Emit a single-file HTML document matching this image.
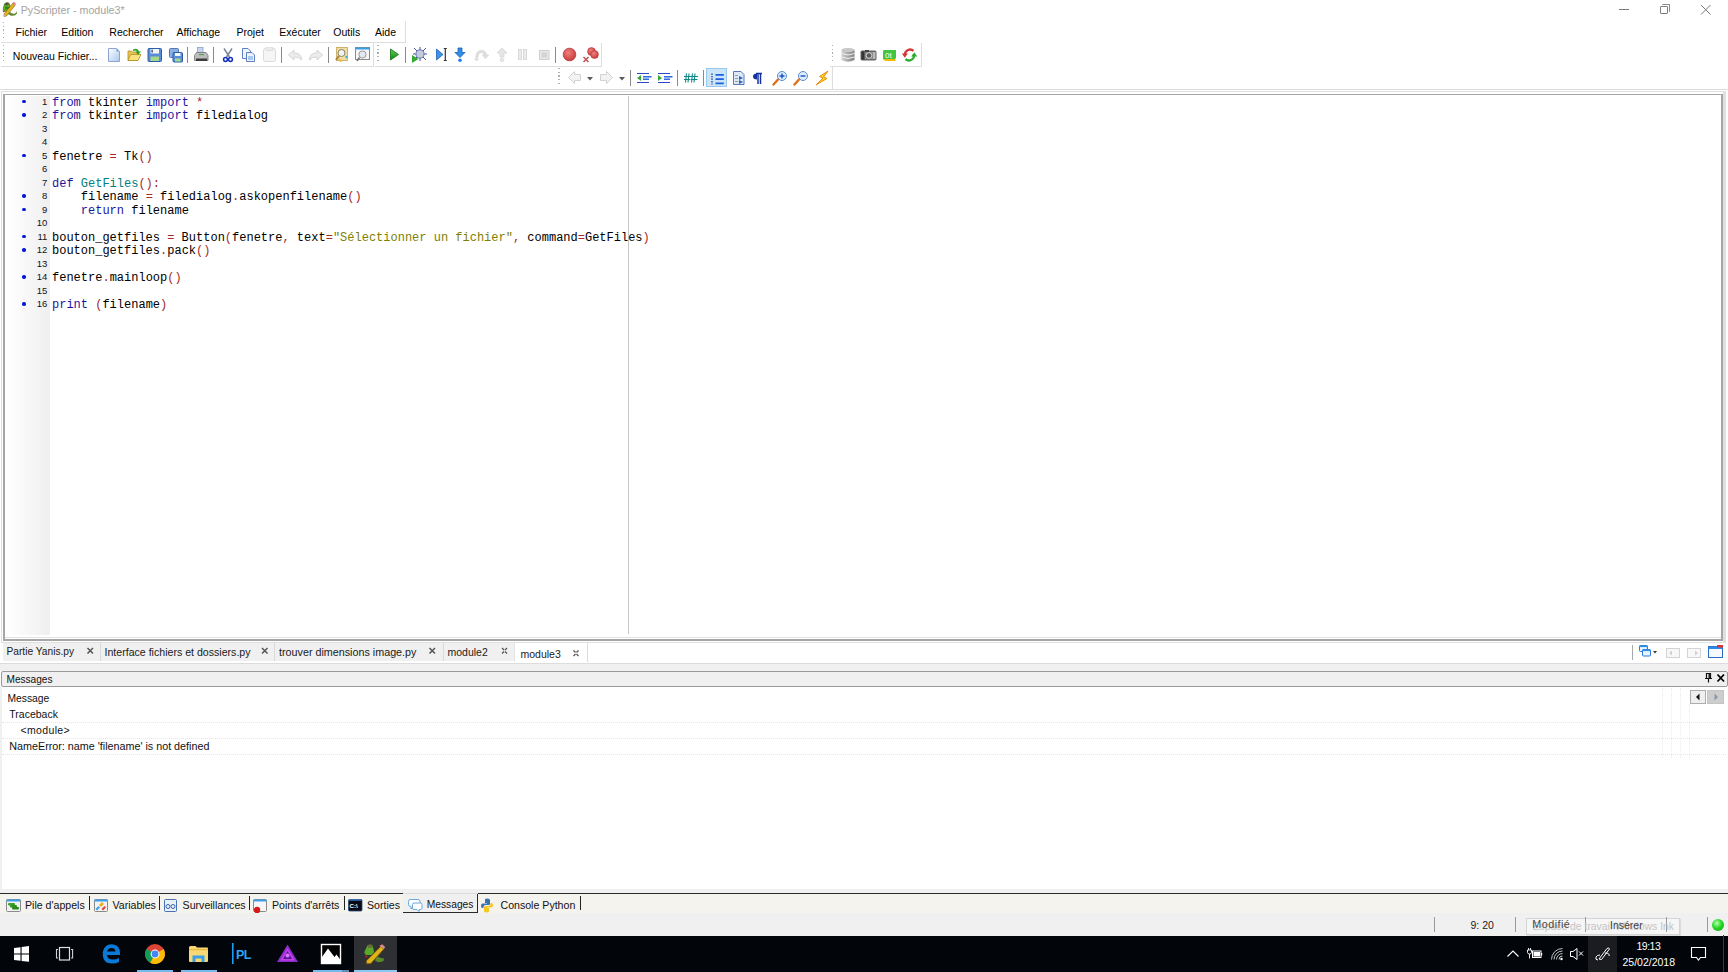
<!DOCTYPE html>
<html><head><meta charset="utf-8">
<style>
*{margin:0;padding:0;box-sizing:border-box}
html,body{width:1728px;height:972px;overflow:hidden;background:#fff}
body{position:relative;font-family:"Liberation Sans",sans-serif;font-size:10.5px;color:#000}
.a{position:absolute}
.t{position:absolute;white-space:pre;line-height:1}
.hl{position:absolute;height:1px}
.vl{position:absolute;width:1px}
.code{position:absolute;left:52px;top:96.8px;font-family:"Liberation Mono",monospace;font-size:12px;line-height:13.5px;white-space:pre;color:#000}
.kw{color:#1c169e}
.op{color:#a52a2a}
.st{color:#808000}
.fn{color:#008080}
.ln{position:absolute;left:27.3px;width:20px;text-align:right;font-family:"Liberation Sans",sans-serif;font-size:9.5px;line-height:13.5px;color:#111;}
.dot{position:absolute;left:22.3px;width:3.4px;height:3.4px;background:#0818d8;border-radius:50%}
.drag{position:absolute;width:1.6px;background:repeating-linear-gradient(180deg,#b0b0b0 0 1.5px,transparent 1.5px 3.65px)}
.sep{position:absolute;width:1px;background:#8a8a8a}
</style></head><body>


<!-- Title bar -->
<svg class="a" style="left:1px;top:1.3px" width="17" height="16" viewBox="0 0 17 16">
 <path d="M2.5 6 Q3 2 6 1.5 Q9 1.5 9 5 Q9.5 9 7 10 L3.5 10.5 Q1.5 9.5 2.5 6Z" fill="#58b828" stroke="#3a5a18" stroke-width="0.5"/>
 <path d="M3.5 2.5 Q5.5 0.8 8 2 L8 4 L4 4.5Z" fill="#6e6a30"/>
 <circle cx="5.5" cy="3.2" r="0.9" fill="#445"/>
 <path d="M4 6.5 Q6 5.5 8 6.8 M4 8 Q6 7.2 8.5 8.2" stroke="#2a4a10" stroke-width="0.7" fill="none"/>
 <path d="M1.5 9.3 L4 10 L2.5 11.5Z" fill="#c83020"/>
 <path d="M9 11 Q11 13.5 14 12.5 Q15.5 11.5 15.5 10 L16 12.5 Q14 15.5 9.5 14.5 L7 13Z" fill="#5c8a28"/>
 <path d="M11.5 2.5 L14 4.5 L5.5 15 L3 15.5 L3 13Z" fill="#e4b418" stroke="#5a4810" stroke-width="0.5"/>
 <path d="M11 2.2 L12.5 1 Q14.5 1 15 3 L14 4.5Z" fill="#d88a8a"/>
 <path d="M3 13 L5.5 15 L2.8 16Z" fill="#d8a878"/>
</svg>
<div class="t" style="left:20.7px;top:5px;font-size:10.7px;color:#a4a4a4">PyScripter - module3*</div>
<div class="hl" style="left:1619px;top:9px;width:9.5px;background:#7a7a7a"></div>
<div class="a" style="left:1659.5px;top:5.5px;width:8px;height:8px;border:1px solid #7e7e7e;background:#fff;border-radius:1px"></div>
<div class="a" style="left:1661.5px;top:4px;width:8px;height:8px;border-top:1px solid #8a8a8a;border-right:1px solid #8a8a8a;border-radius:1px"></div>
<svg class="a" style="left:1699.5px;top:3.5px" width="12" height="12"><path d="M1 1 L10.5 10.5 M10.5 1 L1 10.5" stroke="#7a7a7a" stroke-width="1"/></svg>

<!-- menu bar -->
<div class="drag" style="left:2.7px;top:21.8px;height:17px"></div>
<div class="t" style="left:15.5px;top:27.2px">Fichier</div>
<div class="t" style="left:61.3px;top:27.2px">Edition</div>
<div class="t" style="left:109.3px;top:27.2px">Rechercher</div>
<div class="t" style="left:176.5px;top:27.2px">Affichage</div>
<div class="t" style="left:236.5px;top:27.2px">Projet</div>
<div class="t" style="left:279.3px;top:27.2px">Exécuter</div>
<div class="t" style="left:333.3px;top:27.2px">Outils</div>
<div class="t" style="left:375px;top:27.2px">Aide</div>
<div class="hl" style="left:1px;top:42px;width:405px;background:#dedede"></div>
<div class="vl" style="left:405px;top:21px;height:22px;background:#dedede"></div>

<!-- toolbar row1 -->
<div class="drag" style="left:2.7px;top:45.3px;height:17px"></div>
<div class="t" style="left:12.8px;top:50.7px">Nouveau Fichier...</div>
<div class="hl" style="left:1px;top:66px;width:373px;background:#dedede"></div>
<div class="vl" style="left:373px;top:43px;height:24px;background:#dedede"></div>
<div class="sep" style="left:187px;top:47px;height:16px"></div>
<div class="sep" style="left:213px;top:47px;height:16px"></div>
<div class="sep" style="left:281px;top:47px;height:16px"></div>
<div class="sep" style="left:328px;top:47px;height:16px"></div>
<svg class="a" style="left:0;top:0;z-index:2" width="940" height="92" viewBox="0 0 940 92">
<defs>
 <linearGradient id="gNew" x1="0" y1="0" x2="1" y2="1"><stop offset="0" stop-color="#ffffff"/><stop offset="1" stop-color="#a9c8ee"/></linearGradient>
 <radialGradient id="gRed" cx="0.4" cy="0.35" r="0.7"><stop offset="0" stop-color="#f08080"/><stop offset="1" stop-color="#c83838"/></radialGradient>
 <linearGradient id="gGreen" x1="0" y1="0" x2="0" y2="1"><stop offset="0" stop-color="#5cd05c"/><stop offset="1" stop-color="#108a10"/></linearGradient>
 <linearGradient id="gDB" x1="0" y1="0" x2="1" y2="0"><stop offset="0" stop-color="#d0d0d0"/><stop offset="0.5" stop-color="#a8a8a8"/><stop offset="1" stop-color="#808080"/></linearGradient>
</defs>
<!-- new file -->
<path d="M108.5 48.5 H116.5 L119.5 51.5 V61.5 H108.5 Z" fill="url(#gNew)" stroke="#8ea4cc"/>
<path d="M116.5 48.5 V51.5 H119.5 Z" fill="#6f9fe0"/>
<!-- open -->
<path d="M128 51 H131.5 L132.5 52 H137.5 V60.5 H128Z" fill="#e6c45a" stroke="#b8901e" stroke-width="0.8"/>
<path d="M128 60.5 L130.5 54.5 H141 L138 60.5Z" fill="#f8e27e" stroke="#b8901e" stroke-width="0.8"/>
<path d="M133 49.5 Q138 47.5 139 51.5 L141 51.5 L138 55 L135.5 51.5 L137 51.5 Q136.5 50 133 51Z" fill="#2aa02a"/>
<!-- save -->
<rect x="148" y="48.5" width="13.5" height="13" rx="1" fill="#5b8cd8" stroke="#2d5ea8"/>
<rect x="150.5" y="49" width="8.5" height="4.5" fill="#f2f6fb"/>
<rect x="151.5" y="49.6" width="1.2" height="3" fill="#333"/>
<rect x="150.5" y="56.5" width="8.5" height="4.5" fill="#a6d88c"/>
<!-- save all -->
<rect x="169.5" y="48.5" width="9" height="9" rx="1" fill="#8eb0e0" stroke="#5078b4"/>
<rect x="173" y="52.5" width="9.5" height="9.5" rx="1" fill="#5b8cd8" stroke="#2d5ea8"/>
<rect x="175" y="53" width="5.5" height="3" fill="#f2f6fb"/>
<rect x="175" y="58.5" width="5.5" height="3" fill="#a6d88c"/>
<!-- print -->
<rect x="197.5" y="47.5" width="5.5" height="5" fill="#c6d6f2" stroke="#8aa0c8" stroke-width="0.8"/>
<path d="M194.5 55.5 L196.5 52.5 H206 L208 55.5 V60.5 H194.5Z" fill="#bdbdbd" stroke="#6e6e6e" stroke-width="0.8"/>
<rect x="196" y="58.5" width="11" height="2.5" fill="#3c3c3c"/>
<rect x="199" y="54" width="5" height="1.2" fill="#5aa05a"/>
<!-- cut -->
<path d="M224 48.5 L229.5 57 M232 48.5 L226.5 57" stroke="#7a869e" stroke-width="1.5"/>
<circle cx="225.5" cy="59.5" r="1.9" fill="none" stroke="#1432c0" stroke-width="1.5"/>
<circle cx="230.5" cy="59.5" r="1.9" fill="none" stroke="#1432c0" stroke-width="1.5"/>
<!-- copy -->
<path d="M242.5 48.5 H248 L250.5 51 V58.5 H242.5Z" fill="#eef4fd" stroke="#5f7fbe"/>
<path d="M246.5 52.5 H252 L254.5 55 V61.5 H246.5Z" fill="#eef4fd" stroke="#5f7fbe"/>
<rect x="248" y="56" width="5" height="4" fill="#a8c8f0"/>
<!-- paste disabled -->
<rect x="263.5" y="48.5" width="12" height="13" rx="2" fill="#f5f5f5" stroke="#dadada"/>
<rect x="266" y="47.5" width="7" height="3" fill="#ebebeb" stroke="#d8d8d8" stroke-width="0.6"/>
<!-- undo/redo disabled -->
<path d="M288.5 55 L294 50 V53 Q301.5 53 301.5 60 Q299 56.5 294 57 V60Z" fill="#ececec" stroke="#d4d4d4"/>
<path d="M322.5 55 L317 50 V53 Q309.5 53 309.5 60 Q312 56.5 317 57 V60Z" fill="#ececec" stroke="#d4d4d4"/>
<!-- find -->
<rect x="336.5" y="47.5" width="11" height="13" fill="#f1dda2" stroke="#c4a450" stroke-width="0.8"/>
<circle cx="341.5" cy="53" r="3.5" fill="#eef3f8" stroke="#8a8460" stroke-width="1"/>
<path d="M339 56 L336 60" stroke="#a88440" stroke-width="2"/>
<path d="M338 58 L343 61 L340 62Z" fill="#e8b840"/>
<circle cx="346.5" cy="57" r="1.2" fill="#40b0d0"/>
<!-- find in files -->
<rect x="355.5" y="47.5" width="14" height="12" fill="#f6f6f6" stroke="#8a8a8a"/>
<rect x="355.5" y="47.5" width="14" height="2" fill="#38a0e8"/>
<circle cx="362.5" cy="54.5" r="3.6" fill="#dfe8f4" stroke="#9a9a9a" stroke-width="1"/>
<path d="M359.5 57.5 L357 61" stroke="#707070" stroke-width="1.5"/>
<!-- run -->
<path d="M390.5 49 L398.5 54.5 L390.5 60Z" fill="url(#gGreen)" stroke="#0e6e0e" stroke-width="0.8"/>
<!-- debug -->
<path d="M414 48 L426 60 M426 48 L414 60 M413 54 H427 M420 47 V61" stroke="#4656a8" stroke-width="1"/>
<ellipse cx="420" cy="54" rx="4" ry="4.2" fill="#c4ccdc" stroke="#5464a8" stroke-width="0.8"/>
<path d="M412 55 L418.5 59 L412 63Z" fill="#36a836"/>
<!-- run to cursor -->
<path d="M436.5 49 L443 54.5 L436.5 60Z" fill="#3c94e4" stroke="#1f62b4" stroke-width="0.8"/>
<path d="M445.3 48.5 V60.5 M443.8 48.5 H446.8 M443.8 60.5 H446.8" stroke="#333" stroke-width="1.2"/>
<!-- step into -->
<path d="M458 48 H462 V52.5 H465 L460 57.5 L455 52.5 H458Z" fill="#3090e4" stroke="#1a60b4" stroke-width="0.8"/>
<circle cx="460" cy="60.3" r="1.8" fill="#1f80e4"/>
<!-- step over disabled -->
<path d="M476 57 Q476 50.5 481.5 50.5 Q486 50.5 486.5 55 L488.5 55 L485.5 58.5 L482.5 55 H484.5 Q484 52.5 481.5 52.5 Q478 52.5 478 57Z" fill="#e2e2e2" stroke="#d2d2d2" stroke-width="0.8"/>
<circle cx="476.5" cy="59" r="1.6" fill="#e6e6e6" stroke="#d2d2d2" stroke-width="0.6"/>
<!-- step out disabled -->
<path d="M502 48 L507 53 H504 V57 H500 V53 H497Z" fill="#e6e6e6" stroke="#d4d4d4" stroke-width="0.8"/>
<circle cx="502" cy="60" r="1.8" fill="#e6e6e6" stroke="#d4d4d4" stroke-width="0.6"/>
<!-- pause disabled -->
<rect x="518.5" y="49.5" width="3" height="10" fill="#ebebeb" stroke="#d4d4d4" stroke-width="0.8"/>
<rect x="523.5" y="49.5" width="3" height="10" fill="#ebebeb" stroke="#d4d4d4" stroke-width="0.8"/>
<!-- stop disabled -->
<rect x="539.5" y="50.5" width="9.5" height="9" fill="#e8e8e8" stroke="#cfcfcf"/>
<rect x="541.5" y="52.5" width="5.5" height="5" fill="#d4d4d4"/>
<!-- breakpoint -->
<circle cx="569.5" cy="54.5" r="6.3" fill="url(#gRed)" stroke="#b43434" stroke-width="0.8"/>
<!-- clear bps -->
<circle cx="591.5" cy="51.5" r="3.9" fill="url(#gRed)" stroke="#b43434" stroke-width="0.6"/>
<circle cx="594.5" cy="54.5" r="3.9" fill="url(#gRed)" stroke="#b43434" stroke-width="0.6"/>
<path d="M583.5 57 L588.5 62 M588.5 57 L583.5 62" stroke="#c85454" stroke-width="1.6"/>
<!-- DB -->
<path d="M841.5 50 Q848 46.5 854.5 50 V60 Q848 63.5 841.5 60Z" fill="url(#gDB)"/>
<path d="M841.5 53.5 Q848 56.5 854.5 53.5 M841.5 57 Q848 60 854.5 57" stroke="#f0f0f0" stroke-width="1" fill="none"/>
<ellipse cx="848" cy="50" rx="6.5" ry="2" fill="#c8c8c8"/>
<!-- camera -->
<rect x="861" y="51" width="15" height="9" rx="1" fill="#8a8a8a" stroke="#3a3a3a" stroke-width="0.8"/>
<rect x="865" y="50" width="4" height="2" fill="#444"/>
<rect x="861.5" y="51.5" width="3" height="8" fill="#333"/>
<circle cx="869" cy="55.5" r="2.8" fill="#5a5a5a" stroke="#d0d0d0" stroke-width="1"/>
<rect x="873" y="52" width="2.5" height="7" fill="#b8b8b8"/>
<!-- qt -->
<path d="M884 50 H896 V58 L894.5 59.5 H883 V51Z" fill="#41c441"/>
<text x="885" y="57.6" font-family="Liberation Sans" font-size="8" fill="#fff">0t</text>
<rect x="884.5" y="59" width="11" height="2" fill="#f4b800"/>
<!-- refresh -->
<path d="M913.5 50.8 A5.3 5.3 0 0 0 904.8 54.5" stroke="#d43636" stroke-width="2.3" fill="none"/>
<path d="M901.8 53.5 L907.8 53.5 L904.8 57.8Z" fill="#d43636"/>
<path d="M905.5 59.2 A5.3 5.3 0 0 0 914.2 55.5" stroke="#2aac2a" stroke-width="2.3" fill="none"/>
<path d="M917.2 56.5 L911.2 56.5 L914.2 52.2Z" fill="#2aac2a"/>
<!-- back/fwd disabled -->
<path d="M568.5 77.5 L574.5 71.5 V74.5 H580.5 V80.5 H574.5 V83.5Z" fill="#f2f2f2" stroke="#d2d2d2"/>
<path d="M587 77 H593 L590 80.5Z" fill="#5a5a5a"/>
<path d="M612.5 77.5 L606.5 71.5 V74.5 H600.5 V80.5 H606.5 V83.5Z" fill="#f2f2f2" stroke="#d2d2d2"/>
<path d="M619 77 H625 L622 80.5Z" fill="#5a5a5a"/>
<!-- indent/dedent -->
<path d="M637 73.5 H649 M637 82.5 H649" stroke="#2a48c8" stroke-width="1"/>
<path d="M643 76.8 H651.5" stroke="#1a5ee0" stroke-width="1.4"/>
<path d="M643 79.2 H649" stroke="#1a5ee0" stroke-width="1.4"/>
<path d="M637 78 L641 75 V81Z" fill="#38a838"/>
<path d="M658 73.5 H670 M658 82.5 H670" stroke="#2a48c8" stroke-width="1"/>
<path d="M664 76.8 H672.5" stroke="#1a5ee0" stroke-width="1.4"/>
<path d="M664 79.2 H670" stroke="#1a5ee0" stroke-width="1.4"/>
<path d="M662 78 L658 75 V81Z" fill="#38a838"/>
<!-- ## -->
<path d="M686.5 73.5 L685.5 82.5 M689 73.5 L688 82.5 M692.5 73.5 L691.5 82.5 M695 73.5 L694 82.5 M684 76.5 H690.5 M684 79.5 H690 M690.5 76.5 H698 M690.5 79.5 H697.5" stroke="#118888" stroke-width="1.1"/>
<!-- line numbers icon -->
<path d="M712 73.5 V84.5" stroke="#2a4a8a" stroke-width="1.3" stroke-dasharray="1.6 0.9"/>
<path d="M715.5 74.8 H723.8 M715.5 79.1 H723.8 M715.5 83.4 H723.8" stroke="#1a5ee0" stroke-width="1.8"/>
<!-- doc icon -->
<path d="M733.5 71.5 H741 L744 74.5 V84.5 H733.5Z" fill="#dde8f8" stroke="#5a78b8"/>
<path d="M735 75.5 H738 M735 78.5 H738 M735 81.5 H738" stroke="#888" stroke-width="0.8"/>
<path d="M739 76 L743 78 L739 80Z M739 80 L743 82 L739 84Z" fill="#2a60c0"/>
<!-- pilcrow -->
<path d="M756 73.5 H762 M758 73.5 V84 M760.5 73.5 V84" stroke="#1432a0" stroke-width="1.5"/>
<path d="M757 73.5 Q753 73.5 753 76.5 Q753 79.5 757 79.5Z" fill="#1432a0"/>
<!-- zoom in/out -->
<path d="M773.5 84.5 L778 79.5" stroke="#e07018" stroke-width="2.4" stroke-linecap="round"/>
<circle cx="782" cy="76" r="4.5" fill="#dcefff" stroke="#5a8ad0" stroke-width="1"/>
<path d="M782 73.5 V78.5 M779.5 76 H784.5" stroke="#1a50c0" stroke-width="1.4"/>
<path d="M794.5 84.5 L799 79.5" stroke="#e07018" stroke-width="2.4" stroke-linecap="round"/>
<circle cx="803" cy="76" r="4.5" fill="#dcefff" stroke="#5a8ad0" stroke-width="1"/>
<path d="M800.5 76 H805.5" stroke="#1a50c0" stroke-width="1.4"/>
<!-- lightning -->
<path d="M828 71 L819.5 76.5 L823 78 L816 85 L827 78.5 L823.5 77 Z" fill="#f8d41c" stroke="#ec8c10" stroke-width="1"/>
</svg>

<!-- toolbar 2 (run) -->
<div class="drag" style="left:377.3px;top:45.3px;height:17px"></div>
<div class="hl" style="left:375px;top:66px;width:227px;background:#dedede"></div>
<div class="vl" style="left:601px;top:43px;height:24px;background:#dedede"></div>
<div class="sep" style="left:405px;top:47px;height:16px"></div>
<div class="sep" style="left:555px;top:47px;height:16px"></div>

<!-- toolbar 3 (tools) -->
<div class="drag" style="left:831.8px;top:45.3px;height:17px"></div>
<div class="hl" style="left:830px;top:66px;width:92px;background:#dedede"></div>
<div class="vl" style="left:921px;top:43px;height:24px;background:#dedede"></div>

<!-- toolbar row2 (editor) -->
<div class="drag" style="left:558.3px;top:68.3px;height:17px"></div>
<div class="vl" style="left:832px;top:67px;height:22px;background:#dedede"></div>
<div class="sep" style="left:630px;top:70px;height:16px"></div>
<div class="sep" style="left:677px;top:70px;height:16px"></div>
<div class="sep" style="left:703px;top:70px;height:16px"></div>
<div class="a" style="left:706px;top:68px;width:21px;height:19px;background:#cce4f7;border:1px solid #99c9ef"></div>


<!-- editor frame -->
<div class="hl" style="left:0;top:89px;width:1728px;background:#dcdcdc"></div>
<div class="a" style="left:1px;top:91px;width:1725px;height:552px;border:1px solid #e0e0e0;border-left-width:1.5px;border-right-width:3px"></div>
<div class="a" style="left:3px;top:94px;width:1720px;height:547px;border:2px solid #a6a6a6;border-top-width:1.6px"></div>
<div class="hl" style="left:5px;top:637px;width:1716px;background:#e2e2e2"></div>
<div class="a" style="left:5px;top:96px;width:45px;height:539px;background:linear-gradient(90deg,#ffffff 5%,#efefef)"></div>
<div class="vl" style="left:628px;top:96px;height:538px;background:#c8c8c8"></div>

<div class="code"><span class="kw">from</span> tkinter <span class="kw">import</span> <span class="op">*</span>
<span class="kw">from</span> tkinter <span class="kw">import</span> filedialog


fenetre <span class="op">=</span> Tk<span class="op">()</span>

<span class="kw">def</span> <span class="fn">GetFiles</span><span class="op">():</span>
    filename <span class="op">=</span> filedialog<span class="op">.</span>askopenfilename<span class="op">()</span>
    <span class="kw">return</span> filename

bouton_getfiles <span class="op">=</span> Button<span class="op">(</span>fenetre<span class="op">,</span> text<span class="op">=</span><span class="st">"Sélectionner un fichier"</span><span class="op">,</span> command<span class="op">=</span>GetFiles<span class="op">)</span>
bouton_getfiles<span class="op">.</span>pack<span class="op">()</span>

fenetre<span class="op">.</span>mainloop<span class="op">()</span>

<span class="kw">print</span> <span class="op">(</span>filename<span class="op">)</span></div>
<div class="ln" style="top:94.6px">1</div><div class="ln" style="top:108.1px">2</div><div class="ln" style="top:121.6px">3</div><div class="ln" style="top:135.1px">4</div><div class="ln" style="top:148.6px">5</div><div class="ln" style="top:162.1px">6</div><div class="ln" style="top:175.6px">7</div><div class="ln" style="top:189.1px">8</div><div class="ln" style="top:202.6px">9</div><div class="ln" style="top:216.1px">10</div><div class="ln" style="top:229.6px">11</div><div class="ln" style="top:243.1px">12</div><div class="ln" style="top:256.6px">13</div><div class="ln" style="top:270.1px">14</div><div class="ln" style="top:283.6px">15</div><div class="ln" style="top:297.1px">16</div>
<div class="dot" style="top:99.75px"></div><div class="dot" style="top:113.25px"></div><div class="dot" style="top:153.75px"></div><div class="dot" style="top:194.25px"></div><div class="dot" style="top:207.75px"></div><div class="dot" style="top:234.75px"></div><div class="dot" style="top:248.25px"></div><div class="dot" style="top:275.25px"></div><div class="dot" style="top:302.25px"></div>
<!-- tabs -->
<div class="a" style="left:3px;top:642.5px;width:511px;height:18px;background:#f0f0f0"></div>
<div class="vl" style="left:100px;top:643px;height:18px;background:#dadada"></div>
<div class="vl" style="left:274px;top:643px;height:18px;background:#dadada"></div>
<div class="vl" style="left:443px;top:643px;height:18px;background:#dadada"></div>
<div class="t" style="left:6.5px;top:646.7px;font-size:10.2px;color:#1a1a1a">Partie Yanis.py</div>
<div class="t" style="left:104.5px;top:646.7px;font-size:10.6px;color:#1a1a1a">Interface fichiers et dossiers.py</div>
<div class="t" style="left:279px;top:646.7px;font-size:10.75px;color:#1a1a1a">trouver dimensions image.py</div>
<div class="t" style="left:447.5px;top:646.7px;font-size:10.5px;color:#1a1a1a">module2</div>
<div class="t" style="left:520.5px;top:648.5px;font-size:10.5px;color:#1a1a1a">module3</div>
<svg class="a" style="left:0;top:640px" width="600" height="24" viewBox="0 640 600 24">
 <path d="M87.5 648 L93 653.5 M93 648 L87.5 653.5" stroke="#555" stroke-width="1.5"/>
 <path d="M262 648 L267.5 653.5 M267.5 648 L262 653.5" stroke="#555" stroke-width="1.5"/>
 <path d="M429.5 648 L435 653.5 M435 648 L429.5 653.5" stroke="#555" stroke-width="1.5"/>
 <path d="M502 648 L504 650 M507 648 L505 650 M502 653.5 L504 651.5 M507 653.5 L505 651.5" stroke="#555" stroke-width="1.3"/>
 <path d="M573.5 650.5 L575.5 652.5 M578.5 650.5 L576.5 652.5 M573.5 656 L575.5 654 M578.5 656 L576.5 654" stroke="#555" stroke-width="1.3"/>
</svg>
<div class="vl" style="left:1632px;top:645px;height:15px;background:#a8a8a8"></div>
<svg class="a" style="left:1630px;top:640px" width="98" height="24" viewBox="1630 640 98 24">
 <rect x="1639.5" y="645.5" width="8" height="6" rx="1" fill="#e8f2fc" stroke="#2a7ad8"/>
 <rect x="1639.5" y="645.5" width="8" height="1.6" fill="#2a90e8"/>
 <rect x="1642.5" y="649.5" width="8" height="6.5" rx="1" fill="#e8f2fc" stroke="#2a7ad8"/>
 <rect x="1642.5" y="649.5" width="8" height="1.6" fill="#2a90e8"/>
 <path d="M1653 651 H1657 L1655 653.5Z" fill="#333"/>
 <rect x="1666.5" y="648.5" width="13" height="9" fill="#f8f8f8" stroke="#d4d4d4"/>
 <path d="M1669 653 L1672 650.5 V655.5Z" fill="#d0d0d0"/>
 <rect x="1687.5" y="648.5" width="13" height="9" fill="#f8f8f8" stroke="#d4d4d4"/>
 <path d="M1698 653 L1695 650.5 V655.5Z" fill="#d0d0d0"/>
 <rect x="1708.5" y="646.5" width="14" height="11" fill="#f6f9fe" stroke="#2a6ac8"/>
 <rect x="1708.5" y="646.5" width="14" height="2.5" fill="#2a8ae8"/>
 <rect x="1717" y="645" width="6" height="2.5" fill="#e03030"/>
</svg>
<div class="a" style="left:0;top:663px;width:1728px;height:8px;background:#f0f0f0;border-top:1px solid #dcdcdc"></div>
<div class="vl" style="left:587px;top:643px;height:19px;background:#dcdcdc"></div>
<div class="vl" style="left:514px;top:643px;height:19px;background:#e4e4e4"></div>

<!-- messages header -->
<div class="a" style="left:1px;top:671px;width:1727px;height:16px;background:#f0f0f0;border:1px solid #9a9a9a;border-radius:2px"></div>
<div class="t" style="left:6.5px;top:675px;font-size:10.1px;color:#111">Messages</div>
<svg class="a" style="left:1700px;top:670px" width="28" height="18" viewBox="1700 670 28 18">
 <path d="M1706.5 673.5 H1710.5 V678.5 H1706.5Z M1705 678.5 H1712 M1708.5 678.5 V682.5" stroke="#111" stroke-width="1.2" fill="none"/>
 <path d="M1709.2 674 V678" stroke="#111" stroke-width="1.4"/>
 <path d="M1717.5 674.5 L1724 681.5 M1724 674.5 L1717.5 681.5" stroke="#000" stroke-width="1.8"/>
</svg>

<!-- messages content -->
<div class="t" style="left:7.5px;top:693.5px;font-size:10.3px;color:#111">Message</div>
<div class="t" style="left:9.3px;top:708.8px;font-size:10.5px;color:#111">Traceback</div>
<div class="t" style="left:20.5px;top:724.8px;font-size:10.5px;color:#111;letter-spacing:0.35px">&lt;module&gt;</div>
<div class="t" style="left:9.3px;top:741.3px;font-size:10.75px;color:#111">NameError: name 'filename' is not defined</div>
<div class="hl" style="left:2px;top:722px;width:1724px;height:0;border-top:1px dotted #e6e6e6"></div>
<div class="hl" style="left:2px;top:738px;width:1724px;height:0;border-top:1px dotted #e6e6e6"></div>
<div class="hl" style="left:2px;top:754px;width:1724px;height:0;border-top:1px dotted #e6e6e6"></div>
<div class="vl" style="left:1662px;top:688px;height:70px;width:0;border-left:1px dotted #ececec"></div>
<div class="vl" style="left:1671px;top:688px;height:70px;width:0;border-left:1px dotted #ececec"></div>
<div class="vl" style="left:1680px;top:688px;height:70px;width:0;border-left:1px dotted #ececec"></div>
<div class="vl" style="left:1689px;top:704px;height:54px;width:0;border-left:1px dotted #ececec"></div>
<div class="a" style="left:1690px;top:690px;width:16px;height:14px;background:#efefef;border:1px solid #adadad"></div>
<div class="a" style="left:1707px;top:690px;width:17px;height:14px;background:#cdcdcd;border:1px solid #c4c4c4"></div>
<svg class="a" style="left:1690px;top:690px" width="34" height="14" viewBox="1690 690 34 14">
 <path d="M1699.5 693.5 V700.5 L1696 697Z" fill="#111"/>
 <path d="M1714.5 693.5 V700.5 L1718 697Z" fill="#8a98aa"/>
</svg>

<!-- bottom tabs -->
<div class="a" style="left:0;top:889px;width:1728px;height:4px;background:#f0f0f0"></div>
<div class="a" style="left:0;top:687px;width:1.5px;height:226px;background:#f0f0f0"></div>
<div class="a" style="left:0;top:894px;width:1728px;height:19px;background:#f5f3ee"></div>
<div class="hl" style="left:0;top:893px;width:403px;background:#2a2a2a"></div>
<div class="hl" style="left:477px;top:893px;width:1251px;background:#2a2a2a"></div>
<div class="a" style="left:403px;top:893px;width:75px;height:20px;background:#f0f0f0;border-right:1px solid #2a2a2a;border-bottom:1px solid #2a2a2a"></div>
<div class="hl" style="left:403px;top:893px;width:75px;background:#dcdcdc"></div>
<div class="vl" style="left:89px;top:895.5px;height:14.5px;background:#222"></div>
<div class="vl" style="left:159px;top:895.5px;height:14.5px;background:#222"></div>
<div class="vl" style="left:249px;top:895.5px;height:14.5px;background:#222"></div>
<div class="vl" style="left:344px;top:895.5px;height:14.5px;background:#222"></div>
<div class="vl" style="left:580px;top:895.5px;height:14.5px;background:#222"></div>
<div class="t" style="left:25px;top:900.4px;font-size:10.6px;color:#111">Pile d'appels</div>
<div class="t" style="left:112.5px;top:900.4px;font-size:10.6px;color:#111">Variables</div>
<div class="t" style="left:182.6px;top:900.4px;font-size:10.6px;color:#111">Surveillances</div>
<div class="t" style="left:272px;top:900.4px;font-size:10.6px;color:#111">Points d'arrêts</div>
<div class="t" style="left:367px;top:900.4px;font-size:10.6px;color:#111">Sorties</div>
<div class="t" style="left:426.7px;top:900.4px;font-size:10.25px;color:#111">Messages</div>
<div class="t" style="left:500.5px;top:900.4px;font-size:10.6px;color:#111">Console Python</div>
<svg class="a" style="left:0;top:894px" width="600" height="20" viewBox="0 894 600 20">
 <rect x="6.5" y="899.5" width="14" height="12" rx="1" fill="#f2f2f2" stroke="#8a8a8a"/>
 <rect x="6.5" y="899.5" width="14" height="2" fill="#3aa0e8"/>
 <rect x="8" y="903" width="7" height="2.6" rx="1" fill="#3aa02a"/><rect x="10" y="905" width="7" height="2.6" rx="1" fill="#2e9420"/><rect x="12" y="907" width="7" height="2.6" rx="1" fill="#2a8a1a"/>
 <rect x="94.5" y="899.5" width="13" height="12" rx="1" fill="#f2f2f2" stroke="#8a8a8a"/>
 <rect x="94.5" y="899.5" width="13" height="2" fill="#3aa0e8"/>
 <path d="M99 905 L102 902 L104 904 L101 907Z" fill="#e8b020"/>
 <path d="M95.5 909 L98.5 906 L100 907.5 L97 910.5Z" fill="#3aa0e8"/>
 <path d="M101.5 909 L104.5 906 L106 907.5 L103 910.5Z" fill="#e84040"/>
 <rect x="164.5" y="899.5" width="12" height="12" rx="1" fill="#e8f0fa" stroke="#4a70b0"/>
 <circle cx="168" cy="906.5" r="2" fill="none" stroke="#3a60a8" stroke-width="1"/>
 <circle cx="173" cy="906.5" r="2" fill="none" stroke="#3a60a8" stroke-width="1"/>
 <rect x="253.5" y="899.5" width="13" height="12" rx="1" fill="#f6f6f6" stroke="#8a8a8a"/>
 <rect x="253.5" y="899.5" width="13" height="2" fill="#3aa0e8"/>
 <circle cx="257" cy="910" r="3.2" fill="#d81818"/>
 <rect x="348.5" y="899.5" width="13.5" height="11.5" rx="1" fill="#0a0a14" stroke="#2a4a7a" stroke-width="0.8"/>
 <rect x="349" y="899.5" width="12.5" height="1.2" fill="#3a7ad0"/>
 <text x="349.6" y="907.8" font-family="Liberation Sans" font-weight="bold" font-size="6.2" fill="#fff">C:\</text>
 <path d="M410 899.5 H418 Q420 899.5 420 901.5 V904.5 Q420 906.5 418 906.5 H413 L411 909 V906.5 Q408.5 906.5 408.5 904.5 V901.5 Q408.5 899.5 410 899.5Z" fill="#fff" stroke="#5aa0d8" stroke-width="0.9"/>
 <path d="M414 903 H420.5 Q422 903 422 904.5 V908 Q422 909.5 420.5 909.5 H419 V911.5 L417 909.5 H414 Q412.5 909.5 412.5 908 V904.5 Q412.5 903 414 903Z" fill="#fff" stroke="#5aa0d8" stroke-width="0.9"/>
 <path d="M485 899.5 Q485 898.5 487.5 898.5 Q490 898.5 490 900 V904 Q490 905 488.5 905 H485.5 Q483.5 905 483.5 907 V908 H482.5 Q481 908 481 905.5 Q481 903.5 483 903.5 H487 V903 H485Z" fill="#3a74b0"/>
 <path d="M489 911.5 Q489 912.5 486.5 912.5 Q484 912.5 484 911 V907 Q484 906 485.5 906 H488.5 Q490.5 906 490.5 904 V903 H491.5 Q493 903 493 905.5 Q493 907.5 491 907.5 H487 V908 H489Z" fill="#f4c820"/>
</svg>

<!-- status bar -->
<div class="a" style="left:0;top:913px;width:1728px;height:23px;background:#f0f0f0"></div>
<div class="vl" style="left:1434px;top:917px;height:15px;background:#9a9a9a"></div>
<div class="vl" style="left:1515px;top:917px;height:15px;background:#9a9a9a"></div>
<div class="vl" style="left:1707px;top:917px;height:15px;background:#9a9a9a"></div>
<div class="t" style="left:1470.5px;top:919.5px;font-size:10.5px;color:#222">9: 20</div>
<div class="a" style="left:1526px;top:918px;width:154px;height:17px;background:#f6f6f6;border:1px solid #d4d4d4;box-shadow:1px 1px 1px #ddd"></div>
<div class="vl" style="left:1585px;top:917px;height:15px;background:#9a9a9a"></div>
<div class="vl" style="left:1666px;top:917px;height:15px;background:#9a9a9a"></div>
<div class="t" style="left:1532.5px;top:922px;font-size:10.4px;color:#c4c4c4">Espace de travail Windows Ink</div>
<div class="t" style="left:1532.3px;top:919.3px;font-size:10.8px;color:#4a4a4a;letter-spacing:0.45px">Modifié</div>
<div class="t" style="left:1610px;top:919.5px;font-size:10.5px;color:#444">Insérer</div>
<div class="a" style="left:1712px;top:918.5px;width:12px;height:12px;border-radius:50%;background:radial-gradient(circle at 40% 35%,#b8ffb0,#28d828 45%,#10a010)"></div>

<!-- taskbar -->
<div class="a" style="left:0;top:936px;width:1728px;height:36px;background:#020509"></div>
<div class="a" style="left:354px;top:936px;width:43px;height:36px;background:#2e3034"></div>
<div class="a" style="left:1588px;top:936px;width:29px;height:36px;background:#1a1c20"></div>
<div class="a" style="left:137px;top:970px;width:36px;height:2px;background:#76b9ed"></div>
<div class="a" style="left:181px;top:970px;width:36px;height:2px;background:#76b9ed"></div>
<div class="a" style="left:313px;top:970px;width:29px;height:2px;background:#76b9ed"></div>
<div class="a" style="left:342px;top:970px;width:7px;height:2px;background:#5a8fbd"></div>
<div class="a" style="left:354px;top:970px;width:43px;height:2px;background:#8ac8f4"></div>
<svg class="a" style="left:0;top:935px" width="420" height="37" viewBox="0 935 420 37">
 <path d="M14 948 L20.5 947.2 V953.4 H14Z M21.6 947 L29 946 V953.4 H21.6Z M14 954.5 H20.5 V960.7 L14 960Z M21.6 954.5 H29 V961.8 L21.6 960.9Z" fill="#fff"/>
 <rect x="59.5" y="947.5" width="10" height="12.5" fill="none" stroke="#e0e0e0" stroke-width="1.2"/>
 <path d="M58 949.5 H56.5 V958 H58 M71 949.5 H72.6 V958 H71" fill="none" stroke="#d0d0d0" stroke-width="1.1"/>
 <path d="M102.5 953 Q104 944 112 944.2 Q120 944.5 120 953.5 V955 H107 Q107.5 959.5 113 959.5 Q116.5 959.5 119 958 V962 Q116 963.6 112 963.6 Q103.5 963.6 102.8 955.5 Q102.6 951 106 948 Q104 951 104.5 952.5Z M107.2 951.5 H115.5 Q115.3 948 111.5 948 Q107.8 948 107.2 951.5Z" fill="#0a7ad8"/>
 <circle cx="155" cy="954" r="10" fill="#db4437"/>
 <path d="M155 954 L163.66 949 A10 10 0 0 1 150 962.66Z" fill="#fbbc05"/>
 <path d="M155 954 L150 962.66 A10 10 0 0 1 146.34 949Z" fill="#0f9d58"/>
 <circle cx="155" cy="954" r="4.4" fill="#fff"/>
 <circle cx="155" cy="954" r="3.4" fill="#4285f4"/>
 <path d="M189 947.5 Q189 946 190.5 946 H195.5 L197 947.5 H207 Q208 947.5 208 948.5 V961 Q208 962 207 962 H190 Q189 962 189 961Z" fill="#f8d775"/>
 <rect x="189" y="949" width="19" height="1.2" fill="#e8b840"/>
 <path d="M192.5 962 V955.5 H204.5 V962 H201.5 V958.5 H195.5 V962Z" fill="#38a0e8"/>
 <rect x="232" y="943" width="1.6" height="21" fill="#1aa0f0"/>
 <text x="236" y="959.3" font-family="Liberation Sans" font-weight="bold" font-size="12.5" fill="#2aa4f4" letter-spacing="-0.5">PL</text>
 <path d="M287.5 944.5 L298 962 H277Z" fill="#8a2cc8"/>
 <path d="M287.5 948 L295 960.5 H280Z" fill="#c040e8"/>
 <path d="M287.5 951 L292 959 H283Z" fill="#5a1890"/>
 <circle cx="287.5" cy="955.5" r="2" fill="#e070ff"/>
 <rect x="321.5" y="944.5" width="19" height="19" fill="#000" stroke="#fff" stroke-width="1.4"/>
 <path d="M322 963 V957 L328 948.5 L334.5 957 L336.5 954.5 L340.5 960 V963Z" fill="#fff"/>
 <g transform="translate(362 942) scale(1.45)">
  <path d="M3 4 Q4 1 7 2 L8 5 Q9 8 6 9 L3 9 Q1 8 2 6 Z" fill="#5aa82a"/>
  <path d="M4 2 L7 2 L7 4 L4 4Z" fill="#6b6b3a"/>
  <path d="M2 9 L4 10 L3 11Z" fill="#c03020"/>
  <path d="M10 9 Q12 12 15 11 L15 13 Q12 15 9 13Z" fill="#5a8a2a"/>
  <path d="M13 3 L15 5 L6 15 L3 15 L3 13Z" fill="#e0b418" stroke="#6a5010" stroke-width="0.6"/>
  <path d="M12 2.5 L14 1.5 L16 3.5 L15 5Z" fill="#d98a8a"/>
 </g>
</svg>
<svg class="a" style="left:1490px;top:935px" width="238" height="37" viewBox="1490 935 238 37">
 <path d="M1507.5 956.5 L1513 951 L1518.5 956.5" fill="none" stroke="#fff" stroke-width="1.1"/>
 <path d="M1528.5 948 V950 M1530.5 948 V950 M1527.5 950 H1531.5 V952.5 Q1531.5 954 1529.5 954 Q1527.5 954 1527.5 952.5Z M1529.5 954 V958.5" fill="none" stroke="#fff" stroke-width="0.9"/>
 <rect x="1532.5" y="951" width="8.5" height="6.5" fill="none" stroke="#fff" stroke-width="1"/>
 <rect x="1533.5" y="952" width="6.5" height="4.5" fill="#fff"/>
 <rect x="1541" y="953" width="1.2" height="2.5" fill="#fff"/>
 <path d="M1551.5 959.5 A11 11 0 0 1 1562.5 948.5 M1554 959.5 A8.5 8.5 0 0 1 1562.5 951 M1556.5 959.5 A6 6 0 0 1 1562.5 953.5 M1559 959.5 A3.5 3.5 0 0 1 1562.5 956" fill="none" stroke="#d8d8d8" stroke-width="0.9"/>
 <circle cx="1561.5" cy="959" r="1.2" fill="#fff"/>
 <path d="M1570.5 951.5 H1573 L1577 948.5 V959.5 L1573 956.5 H1570.5Z" fill="none" stroke="#fff" stroke-width="1"/>
 <path d="M1579 951.5 L1583 955.5 M1583 951.5 L1579 955.5" stroke="#fff" stroke-width="1"/>
 <path d="M1598 960 Q1595 960 1596 957 Q1597 955 1600 955 M1599 959 L1607 948.5 Q1609 947 1609.5 949 L1601.5 959.5Z M1605 953 Q1610 953 1609 956" fill="none" stroke="#fff" stroke-width="1"/>
 <path d="M1691.5 947.5 H1705.5 V957.5 H1700.5 L1698.5 960 L1696.5 957.5 H1691.5Z" fill="none" stroke="#fff" stroke-width="1.1"/>
 <rect x="1723" y="935" width="1" height="37" fill="#3a3a3a"/>
</svg>
<div class="t" style="left:1636.5px;top:941px;font-size:10.5px;color:#fff;letter-spacing:-0.5px">19:13</div>
<div class="t" style="left:1622.5px;top:956.5px;font-size:10.5px;color:#fff">25/02/2018</div>

</body></html>
